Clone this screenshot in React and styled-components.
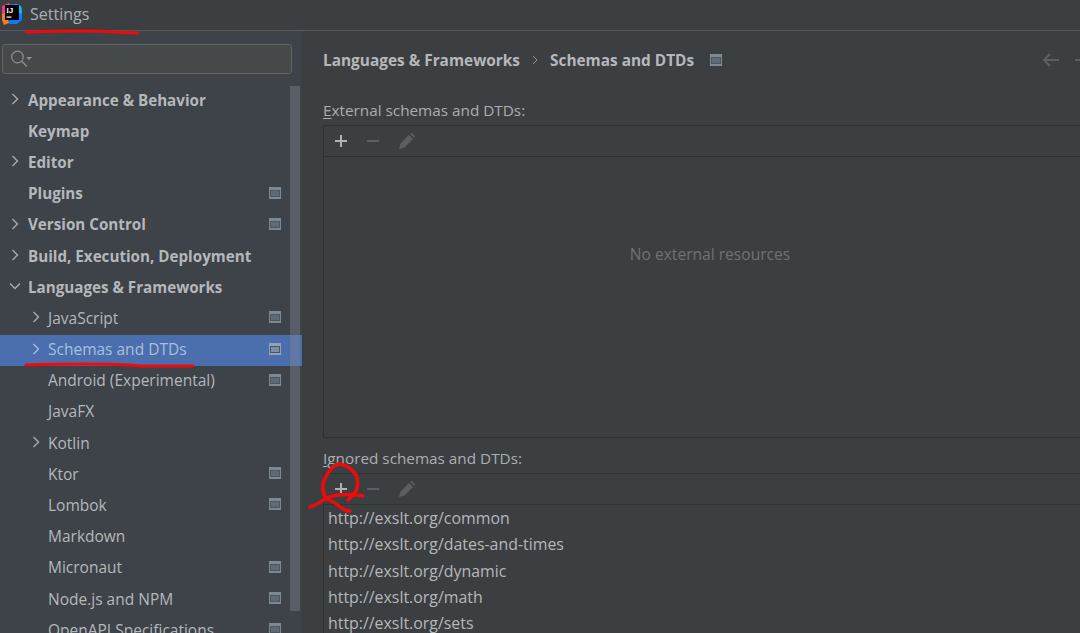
import React from "react";
import styled, { createGlobalStyle } from "styled-components";

const Global = createGlobalStyle`
  html, body {
    margin: 0;
    height: 100%;
    overflow: hidden;
    background: #3c3f41;
  }
  * { box-sizing: border-box; }
`;

const Page = styled.div`
  position: relative;
  width: 1080px;
  height: 633px;
  overflow: hidden;
  font-family: "Open Sans", "Noto Sans", sans-serif;
  font-size: 15.3px;
  color: #b4b8bb;
  background: #3c3f41;
`;

const TitleBar = styled.div`
  display: flex;
  align-items: center;
  height: 31px;
  gap: 7px;
  padding: 0 0 3px 1px;
  border-bottom: 1px solid #55585a;
  background: #3c3f41;
`;

const Title = styled.span`
  font-size: 16px;
  color: #a9b0b5;
`;

const Body = styled.div`
  display: flex;
  height: 602px;
`;

const Sidebar = styled.div`
  position: relative;
  width: 302px;
  flex: none;
  overflow: hidden;
  background: #3e4249;
  padding-top: 13px;
`;

const Search = styled.div`
  display: flex;
  align-items: center;
  width: 290px;
  height: 30px;
  margin-left: 2px;
  padding-left: 7px;
  background: #45494a;
  border: 1px solid #646464;
  border-radius: 3px;
`;

const Tree = styled.div`
  margin-top: 11px;
`;

const Row = styled.div`
  display: flex;
  align-items: center;
  height: 31.2px;
  padding: 0 0 2px ${(p) => (p.$child ? 48 : 28)}px;
  position: relative;
  font-size: ${(p) => (p.$child ? 15.5 : 15.2)}px;
  font-weight: ${(p) => (p.$child ? 400 : 700)};
  color: ${(p) => (p.$selected ? "#a9c0d8" : "#b4b8bb")};
  background: ${(p) => (p.$selected ? "#4b6eaf" : "transparent")};
  white-space: nowrap;
`;

const Arrow = styled.svg`
  position: absolute;
  left: ${(p) => (p.$child ? 30 : 9)}px;
  top: 8px;
`;

const ProjectSlot = styled.span`
  position: absolute;
  left: 269px;
  top: 8px;
  display: flex;
`;

const Scrollbar = styled.div`
  position: absolute;
  left: 290px;
  top: 55px;
  width: 10px;
  height: 525px;
  background: rgba(130, 135, 145, 0.4);
`;

const Main = styled.div`
  flex: 1;
  min-width: 0;
  padding: 16px 0 0 20px;
  background: #3c3f41;
  border-left: 1px solid #393c3e;
`;

const Crumbs = styled.div`
  display: flex;
  align-items: center;
  height: 26px;
  font-size: 15.4px;
  font-weight: 700;
`;

const CrumbGap = styled.span`
  display: flex;
  margin: 0 11px 0 12px;
`;

const ProjectGap = styled.span`
  display: flex;
  margin-left: 16px;
`;

const NavArrows = styled.div`
  display: flex;
  gap: 16px;
  margin-left: auto;
  margin-right: -11px;
`;

const Label = styled.div`
  height: 20px;
  line-height: 20px;
  margin-top: ${(p) => p.$top}px;
  color: #a9aeb2;
  white-space: nowrap;
`;

const Mnemonic = styled.span`
  text-decoration: underline;
  text-underline-offset: 2px;
`;

const Table = styled.div`
  margin-top: 5px;
  height: ${(p) => p.$height}px;
  border: 1px solid #323232;
  border-right: none;
  ${(p) => p.$open && "border-bottom: none;"}
`;

const Toolbar = styled.div`
  display: flex;
  align-items: center;
  height: 31px;
  padding-left: 10px;
  gap: 18px;
  border-bottom: 1px solid #323232;
`;

const Empty = styled.div`
  display: flex;
  align-items: center;
  justify-content: center;
  height: 193px;
  padding-left: 16px;
  font-size: 15.6px;
  color: #6e7173;
`;

const Url = styled.div`
  height: 26.3px;
  line-height: 26.3px;
  padding-left: 4px;
  font-size: 15.9px;
  color: #b4b8bb;
  white-space: nowrap;
`;

const Ink = styled.svg`
  position: absolute;
  left: 0;
  top: 0;
  pointer-events: none;
`;

const IdeaLogo = () => (
  <svg width="22" height="24" viewBox="0 0 22 24" style={{ flex: "none" }}>
    <polygon points="1,4 8,1 12,6 5,13 1,12" fill="#fc318c" />
    <polygon points="1,12 6,10 8,21 3,23 1,18" fill="#fe7b1f" />
    <polygon points="10,2 17,2 21,6 21,18 16,22 8,22" fill="#087cfa" />
    <polygon points="14,2 20,4 21,12 16,10" fill="#07c3f2" />
    <rect x="4" y="3" width="14" height="15" fill="#000" />
    <text x="5.5" y="11" fontSize="8" fontWeight="700" fill="#fff" fontFamily="Liberation Sans, sans-serif">IJ</text>
    <rect x="5.5" y="14.5" width="5" height="1.2" fill="#fff" />
  </svg>
);

const SearchIcon = () => (
  <svg width="24" height="20" viewBox="0 0 24 20">
    <circle cx="7.5" cy="8" r="5.8" fill="none" stroke="#8a8f93" strokeWidth="1.2" />
    <path d="M12 12.5 L17 17.5" stroke="#8a8f93" strokeWidth="1.5" fill="none" />
    <path d="M16 8 h6 l-3 3 z" fill="#8a8f93" />
  </svg>
);

const Chevron = ({ open, child, dim }) => (
  <Arrow $child={child} width="12" height="12" viewBox="0 0 12 12">
    <path
      d={open ? "M1 3.5 L6 8.5 L11 3.5" : "M3.5 1 L8.5 6 L3.5 11"}
      fill="none"
      stroke={dim ? "#a9bdd6" : "#a7abae"}
      strokeWidth="1.4"
    />
  </Arrow>
);

const ProjectIcon = ({ selected }) => (
  <svg width="12" height="12" viewBox="0 0 12 12">
    <rect x="0" y="0" width="12" height="12" fill={selected ? "#8ea2bd" : "#7c8892"} />
    <rect x="1.5" y="3.5" width="9" height="6" fill={selected ? "#7a8ea8" : "#5f6a75"} stroke="#4f555d" />
  </svg>
);

const Plus = () => (
  <svg width="14" height="14" viewBox="0 0 14 14">
    <path d="M7 1 V13 M1 7 H13" stroke="#afb1b3" strokeWidth="2" />
  </svg>
);

const Minus = () => (
  <svg width="14" height="14" viewBox="0 0 14 14">
    <path d="M1 7 H13" stroke="#5c5f61" strokeWidth="2" />
  </svg>
);

const Pencil = () => (
  <svg width="18" height="18" viewBox="0 0 18 18">
    <path d="M1 17 L2.5 11.5 L11 3 L15 7 L6.5 15.5 Z M12.2 1.8 L13.5 0.8 L17.2 4.5 L16.2 5.8 Z" fill="#5c5f61" />
  </svg>
);

const Tools = () => (
  <Toolbar>
    <Plus />
    <Minus />
    <Pencil />
  </Toolbar>
);

const rows = [
  { label: "Appearance & Behavior", arrow: true },
  { label: "Keymap" },
  { label: "Editor", arrow: true },
  { label: "Plugins", project: true },
  { label: "Version Control", arrow: true, project: true },
  { label: "Build, Execution, Deployment", arrow: true },
  { label: "Languages & Frameworks", arrow: true, open: true },
  { label: "JavaScript", child: true, arrow: true, project: true },
  { label: "Schemas and DTDs", child: true, arrow: true, project: true, selected: true },
  { label: "Android (Experimental)", child: true, project: true },
  { label: "JavaFX", child: true },
  { label: "Kotlin", child: true, arrow: true },
  { label: "Ktor", child: true, project: true },
  { label: "Lombok", child: true, project: true },
  { label: "Markdown", child: true },
  { label: "Micronaut", child: true, project: true },
  { label: "Node.js and NPM", child: true, project: true },
  { label: "OpenAPI Specifications", child: true, project: true },
];

const urls = ["common", "dates-and-times", "dynamic", "math", "sets"];

export default function App() {
  return (
    <Page>
      <Global />
      <TitleBar>
        <IdeaLogo />
        <Title>Settings</Title>
      </TitleBar>
      <Body>
        <Sidebar>
          <Search>
            <SearchIcon />
          </Search>
          <Tree>
            {rows.map((r) => (
              <Row key={r.label} $child={r.child} $selected={r.selected}>
                {r.arrow && <Chevron open={r.open} child={r.child} dim={r.selected} />}
                {r.label}
                {r.project && (
                  <ProjectSlot>
                    <ProjectIcon selected={r.selected} />
                  </ProjectSlot>
                )}
              </Row>
            ))}
          </Tree>
          <Scrollbar />
        </Sidebar>
        <Main>
          <Crumbs>
            Languages &amp; Frameworks
            <CrumbGap>
              <svg width="7" height="10" viewBox="0 0 7 10">
                <path d="M1 1 L5 5 L1 9" fill="none" stroke="#8f9397" strokeWidth="1" />
              </svg>
            </CrumbGap>
            Schemas and DTDs
            <ProjectGap>
              <ProjectIcon />
            </ProjectGap>
            <NavArrows>
              <svg width="16" height="14" viewBox="0 0 16 14">
                <path d="M1 7 H16 M7 1 L1 7 L7 13" fill="none" stroke="#5c5f61" strokeWidth="2" />
              </svg>
              <svg width="16" height="14" viewBox="0 0 16 14">
                <path d="M0 7 H15" fill="none" stroke="#5c5f61" strokeWidth="2" />
              </svg>
            </NavArrows>
          </Crumbs>
          <Label $top={27}>
            <Mnemonic>E</Mnemonic>xternal schemas and DTDs:
          </Label>
          <Table $height={313}>
            <Tools />
            <Empty>No external resources</Empty>
          </Table>
          <Label $top={10}>
            <Mnemonic>I</Mnemonic>gnored schemas and DTDs:
          </Label>
          <Table $height={170} $open>
            <Tools />
            {urls.map((u) => (
              <Url key={u}>http://exslt.org/{u}</Url>
            ))}
          </Table>
        </Main>
      </Body>
      <Ink width="1080" height="633" viewBox="0 0 1080 633">
        <g fill="none" stroke="#f00a0a" strokeWidth="3" strokeLinecap="round" strokeLinejoin="round">
          <path d="M26 32 C60 31 90 30 112 32 L138 33" />
          <path d="M26 365 C60 364 110 363 140 366 L193 366" />
          <path strokeWidth="3.5" d="M325 497 C321 488 322 481 328 473 C332 467 336 464 340 464 C346 465 352 469 356 475 C359 482 358 490 353 495 L348 500" />
          <path strokeWidth="3.5" d="M310 507 C318 505 322 500 327 498 C336 494 350 494 363 496" />
          <path strokeWidth="3.5" d="M326 498 C331 501 336 503 339 506 C343 510 346 511 350 511" />
        </g>
      </Ink>
    </Page>
  );
}
